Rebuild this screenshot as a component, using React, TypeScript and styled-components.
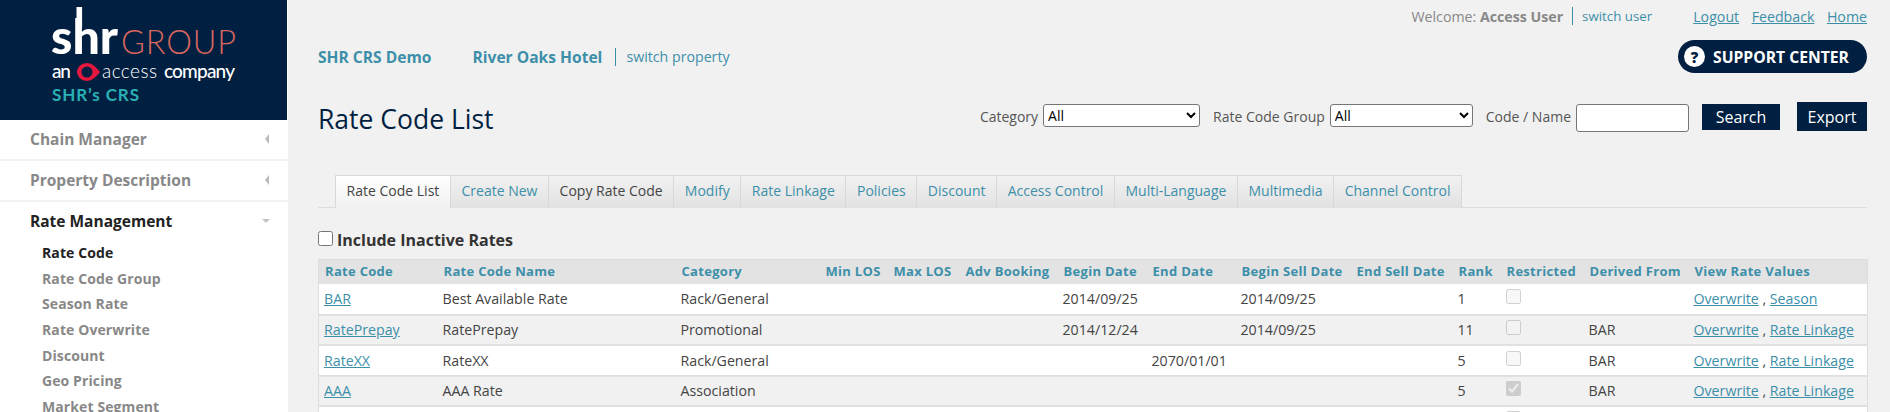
import React from "react";
import styled, { createGlobalStyle } from "styled-components";

const Global = createGlobalStyle`
  html, body { margin: 0; padding: 0; height: 100%; overflow: hidden; background: #f1f1f1; }
  body { font-family: "Open Sans", "Liberation Sans", sans-serif; font-size: 14.2px; color: #444; }
  * { box-sizing: border-box; }
`;
const NAVY = "#001f41";
const TEAL = "#3d8fa9";

const Page = styled.div`display: flex; height: 412px; overflow: hidden;`;
const Sidebar = styled.aside`width: 288px; flex: none; background: #fff;`;
const LogoBox = styled.div`height: 120px; width: 287px; background: ${NAVY};`;
const NavGroup = styled.div<{ $open?: boolean }>`
  height: ${(p) => (p.$open ? "auto" : "41px")};
  border-bottom: ${(p) => (p.$open ? "none" : "2px solid #f1f1f1")};
`;
const NavHead = styled.div<{ $active?: boolean }>`
  display: flex; align-items: center; justify-content: space-between;
  height: 37px; padding: 0 18px 0 30px;
  font-size: 15.5px; font-weight: 700; color: ${(p) => (p.$active ? "#222" : "#888")};
`;
const CaretLeft = styled.span`
  width: 0; height: 0; border-style: solid; border-width: 5px 4px 5px 0;
  border-color: transparent #bbb transparent transparent; margin-right: 1px;
`;
const CaretDown = styled.span`
  width: 0; height: 0; border-style: solid; border-width: 4px 4.5px 0 4.5px;
  border-color: #c4c4c4 transparent transparent transparent;
`;
const SubList = styled.div`display: flex; flex-direction: column; padding-top: 1px;`;
const SubItem = styled.a<{ $active?: boolean }>`
  height: 25.7px; line-height: 25.7px; padding-left: 42px;
  font-size: 14px; font-weight: 700; letter-spacing: 0.1px; color: ${(p) => (p.$active ? "#222" : "#888")};
`;

const Main = styled.main`flex: 1; min-width: 0; padding: 0 23px 0 30px;`;
const TopBar = styled.div`display: flex; justify-content: flex-end; align-items: center; height: 32px; color: #888; font-size: 14.2px;`;
const Welcome = styled.span`white-space: nowrap; b { font-weight: 700; }`;
const Divider = styled.span`width: 1px; height: 18px; background: ${TEAL}; display: inline-block;`;
const SwitchLink = styled.a`color: ${TEAL}; font-size: 13.3px; white-space: nowrap;`;
const TopLinks = styled.div`display: flex; gap: 12.5px; margin-left: 41px;`;
const ULink = styled.a`color: ${TEAL}; text-decoration: underline; white-space: nowrap;`;
const UserBox = styled.div`display: flex; align-items: center; gap: 9px;`;

const PropRow = styled.div`display: flex; justify-content: space-between; align-items: center; height: 33px; margin-top: 8px;`;
const PropLeft = styled.div`display: flex; align-items: center; margin-top: 0;`;
const PropName = styled.a`font-size: 15.6px; font-weight: 700; color: ${TEAL}; margin-right: 41px;`;
const PropHotel = styled(PropName)`margin-right: 13px;`;
const PropSwitch = styled(SwitchLink)`margin-left: 10px; font-size: 14.2px;`;
const Support = styled.a`
  display: flex; align-items: center; width: 189px; height: 33px; border-radius: 17px; background: ${NAVY};
  padding-left: 6px; color: #fff; font-weight: 700; font-size: 15.7px; gap: 8px; white-space: nowrap;
`;
const Help = styled.span`
  width: 21px; height: 21px; border-radius: 50%; background: #fff; color: ${NAVY}; display: flex;
  align-items: center; justify-content: center; font-size: 15px; font-weight: 800;
`;

const TitleRow = styled.div`display: flex; justify-content: space-between; align-items: flex-start; margin-top: 29px; height: 73px;`;
const Title = styled.h1`margin: 0; font-size: 26.5px; font-weight: 400; color: ${NAVY}; line-height: 36px; margin-top: -1px;`;
const Filters = styled.div`display: flex; align-items: flex-start;`;
const Label = styled.label`font-size: 14px; line-height: 26px; margin-top: 2px; color: #555; white-space: nowrap; margin-right: 5px;`;
const Select = styled.select<{ $w: number }>`
  width: ${(p) => p.$w}px; height: 23px; margin: 2px 13px 0 0; font-family: "Open Sans", sans-serif; font-size: 14px; background: #fff; color: #000;
  border: 1px solid #767676; border-radius: 3px;
`;
const TextInput = styled.input`width: 113px; height: 28px; margin: 2px 13px 0 0; border: 1px solid #767676; border-radius: 3px; background: #fff;`;
const Btn = styled.button<{ $w: number; $h: number; $top: number; $left: number }>`
  width: ${(p) => p.$w}px; height: ${(p) => p.$h}px; margin: ${(p) => p.$top}px 0 0 ${(p) => p.$left}px; border: 0; background: ${NAVY}; color: #fff;
  font-family: "Open Sans", sans-serif; font-size: 16px; padding: 0;
`;

const Tabs = styled.div`display: flex; padding-left: 17px; border-bottom: 1px solid #ddd; height: 33px;`;
const Tab = styled.a<{ $active?: boolean; $dark?: boolean }>`
  height: 33px; padding: 0 10.6px; line-height: 30px; font-size: 14px; white-space: nowrap;
  border-top: 1px solid #d8d8d8; border-right: 1px solid #d8d8d8;
  border-left: ${(p) => (p.$active ? "1px solid #d8d8d8" : "none")};
  background: ${(p) => (p.$active ? "linear-gradient(#fff, #f1f1f1)" : "linear-gradient(#f1f1f1, #e2e2e2)")};
  color: ${(p) => (p.$active || p.$dark ? "#444" : TEAL)};
`;
const IncludeRow = styled.label`display: flex; align-items: center; height: 22px; margin-top: 21px; font-size: 16px; font-weight: 700; color: #333;`;
const IncludeBox = styled.input`width: 15px; height: 15px; margin: 0 4px 3px 0;`;

const Table = styled.table`
  margin-top: 8px; border-collapse: collapse; table-layout: fixed; width: 1549px; background: #fff;
  border: 1px solid #ddd; border-bottom: 0;
`;
const Th = styled.th`
  height: 24px; padding: 0 0 1px 6px; background: #e3e3e3; color: ${TEAL}; font-size: 13px; letter-spacing: 0.3px; font-weight: 700; text-align: left; white-space: nowrap;
`;
const Tr = styled.tr<{ $alt?: boolean }>`background: ${(p) => (p.$alt ? "#f1f1f1" : "#fff")}; border-bottom: 2px solid #e0e0e0;`;
const Td = styled.td<{ $h?: number }>`height: ${(p) => p.$h ?? 30}px; padding: 0 0 0 5px; font-size: 14.2px; color: #444; white-space: nowrap;`;
const CellLink = styled(ULink)``;
const RowBox = styled.input`width: 15px; height: 15px; margin: 0 0 4px 0; display: block;`;

const widths = [119, 238, 144, 68, 72, 98, 89, 89, 115, 102, 48, 83, 105, 179];
const heads = ["Rate Code","Rate Code Name","Category","Min LOS","Max LOS","Adv Booking","Begin Date","End Date","Begin Sell Date","End Sell Date","Rank","Restricted","Derived From","View Rate Values"];
const rows = [
  { code: "BAR", name: "Best Available Rate", cat: "Rack/General", begin: "2014/09/25", end: "", sell: "2014/09/25", rank: "1", checked: false, from: "", second: "Season", h: 31 },
  { code: "RatePrepay", name: "RatePrepay", cat: "Promotional", begin: "2014/12/24", end: "", sell: "2014/09/25", rank: "11", checked: false, from: "BAR", second: "Rate Linkage", h: 30 },
  { code: "RateXX", name: "RateXX", cat: "Rack/General", begin: "", end: "2070/01/01", sell: "", rank: "5", checked: false, from: "BAR", second: "Rate Linkage", h: 31 },
  { code: "AAA", name: "AAA Rate", cat: "Association", begin: "", end: "", sell: "", rank: "5", checked: true, from: "BAR", second: "Rate Linkage", h: 30 },
];
const nav = ["Rate Code Group","Season Rate","Rate Overwrite","Discount","Geo Pricing","Market Segment"];
const tabs = ["Create New","Copy Rate Code","Modify","Rate Linkage","Policies","Discount","Access Control","Multi-Language","Multimedia","Channel Control"];

const Logo = () => (
  <svg width="287" height="120" viewBox="0 0 287 120" role="img" aria-label="shr GROUP">
    <rect x="76.500" y="7" width="5.600" height="20" fill="#fff" />
    <text x="51" y="54" fontFamily="Lato, sans-serif" fontWeight="900" fontSize="48" fill="#fff" textLength="67" lengthAdjust="spacingAndGlyphs">shr</text>
    <text x="121" y="54" fontFamily="Lato, sans-serif" fontWeight="300" fontSize="32.500" fill="#d9675f" textLength="115" lengthAdjust="spacing">GROUP</text>
    <text x="52" y="78" fontFamily="Lato, sans-serif" fontWeight="500" fontSize="19" fill="#fff" textLength="19" lengthAdjust="spacing">an</text>
    <path fillRule="evenodd" fill="#e4173e" d="M86.500 63c5 0 8.500 2.800 13.500 9-5 6.200-8.500 9-13.500 9a9.500 9 0 0 1 0-18zm.5 3.500a5.500 5.500 0 1 0 0 11 5.500 5.500 0 0 0 0-11z" />
    <text x="102" y="78" fontFamily="Lato, sans-serif" fontWeight="300" fontSize="19" fill="#fff" textLength="55" lengthAdjust="spacing">access</text>
    <text x="164" y="78" fontFamily="Lato, sans-serif" fontWeight="500" fontSize="19" fill="#fff" textLength="71" lengthAdjust="spacing">company</text>
    <text x="52" y="101" fontFamily="Lato, sans-serif" fontWeight="700" fontSize="17" fill="#29b1b5" textLength="87" lengthAdjust="spacing">SHR’s CRS</text>
  </svg>
);

export default function App() {
  return (
    <Page>
      <Global />
      <Sidebar>
        <LogoBox><Logo /></LogoBox>
        <NavGroup><NavHead>Chain Manager<CaretLeft /></NavHead></NavGroup>
        <NavGroup><NavHead>Property Description<CaretLeft /></NavHead></NavGroup>
        <NavGroup $open>
          <NavHead $active>Rate Management<CaretDown /></NavHead>
          <SubList>
            <SubItem $active>Rate Code</SubItem>
            {nav.map((n) => <SubItem key={n}>{n}</SubItem>)}
          </SubList>
        </NavGroup>
      </Sidebar>
      <Main>
        <TopBar>
          <UserBox>
            <Welcome>Welcome: <b>Access User</b></Welcome>
            <Divider />
            <SwitchLink>switch user</SwitchLink>
          </UserBox>
          <TopLinks>
            <ULink>Logout</ULink>
            <ULink>Feedback</ULink>
            <ULink>Home</ULink>
          </TopLinks>
        </TopBar>
        <PropRow>
          <PropLeft>
            <PropName>SHR CRS Demo</PropName>
            <PropHotel>River Oaks Hotel</PropHotel>
            <Divider />
            <PropSwitch>switch property</PropSwitch>
          </PropLeft>
          <Support><Help>?</Help>SUPPORT CENTER</Support>
        </PropRow>
        <TitleRow>
          <Title>Rate Code List</Title>
          <Filters>
            <Label>Category</Label>
            <Select $w={157}><option>All</option></Select>
            <Label>Rate Code Group</Label>
            <Select $w={143}><option>All</option></Select>
            <Label>Code / Name</Label>
            <TextInput />
            <Btn $w={78} $h={26} $top={2} $left={0}>Search</Btn>
            <Btn $w={70} $h={29} $top={0} $left={17}>Export</Btn>
          </Filters>
        </TitleRow>
        <Tabs>
          <Tab $active>Rate Code List</Tab>
          {tabs.map((t) => <Tab key={t} $dark={t === "Copy Rate Code"}>{t}</Tab>)}
        </Tabs>
        <IncludeRow><IncludeBox type="checkbox" />Include Inactive Rates</IncludeRow>
        <Table>
          <colgroup>{widths.map((w, i) => <col key={i} width={w} />)}</colgroup>
          <thead><tr>{heads.map((h) => <Th key={h}>{h}</Th>)}</tr></thead>
          <tbody>
            {rows.map((r, i) => (
              <Tr key={r.code} $alt={i % 2 === 1}>
                <Td $h={r.h}><CellLink>{r.code}</CellLink></Td>
                <Td>{r.name}</Td>
                <Td>{r.cat}</Td>
                <Td /><Td /><Td />
                <Td>{r.begin}</Td>
                <Td>{r.end}</Td>
                <Td>{r.sell}</Td>
                <Td />
                <Td>{r.rank}</Td>
                <Td><RowBox type="checkbox" disabled checked={r.checked} readOnly /></Td>
                <Td>{r.from}</Td>
                <Td><CellLink>Overwrite</CellLink> , <CellLink>{r.second}</CellLink></Td>
              </Tr>
            ))}
            <Tr>
              <Td /><Td /><Td /><Td /><Td /><Td /><Td /><Td /><Td /><Td /><Td />
              <Td><RowBox type="checkbox" disabled readOnly /></Td>
              <Td /><Td />
            </Tr>
          </tbody>
        </Table>
      </Main>
    </Page>
  );
}
